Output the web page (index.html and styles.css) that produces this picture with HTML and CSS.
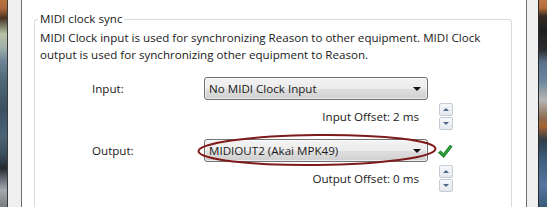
FILE: index.html
```html
<!DOCTYPE html>
<html>
<head>
<meta charset="utf-8">
<link rel="stylesheet" href="styles.css">
</head>
<body>
<div class="strip strip-left"></div>
<div class="panel panel-left"></div>
<main class="content">
  <fieldset class="group">
    <legend class="legend">MIDI clock sync</legend>
    <p class="desc">MIDI Clock input is used for synchronizing Reason to other equipment. MIDI Clock output is used for synchronizing other equipment to Reason.</p>
    <div class="grid">
      <div class="label r1">Input:</div>
      <div class="combo r1">
        <span class="combo-text">No MIDI Clock Input</span>
        <span class="arrow"></span>
      </div>
      <div class="offset r2">Input Offset: 2 ms</div>
      <div class="spin r2"><span class="spin-btn up"><i></i></span><span class="spin-btn down"><i></i></span></div>

      <div class="label r3">Output:</div>
      <div class="combo r3">
        <span class="combo-text">MIDIOUT2 (Akai MPK49)</span>
        <span class="arrow"></span>
        <svg class="ring" width="242" height="36" viewBox="0 0 242 36"><ellipse cx="121" cy="17" rx="118.5" ry="15" fill="none" stroke="#7f1a1a" stroke-width="2" transform="rotate(-0.6 121 17)"/></svg>
      </div>
      <div class="check r3"><svg width="16" height="15" viewBox="0 0 16 15"><path d="M0.8 8.4 L3.8 6.4 L6.3 9.2 L13 0.8 L15.6 2.4 L6.8 14 Z" fill="#17802a"/><path d="M2 8.4 L3.7 7.4 L6.4 10.4 L13.2 1.9 L14.5 2.7 L6.8 12.6 Z" fill="#2fa03a"/></svg></div>
      <div class="offset r4">Output Offset: 0 ms</div>
      <div class="spin r4"><span class="spin-btn up"><i></i></span><span class="spin-btn down"><i></i></span></div>
    </div>
  </fieldset>
</main>
<div class="panel panel-right"></div>
<div class="strip strip-right"></div>
</body>
</html>
```
FILE: styles.css
```css
html, body {
  margin: 0;
  padding: 0;
}
body {
  width: 547px;
  height: 207px;
  overflow: hidden;
  display: flex;
  font-family: "Open Sans", "Noto Sans", sans-serif;
  font-size: 11.6px;
  color: #1a1a1a;
  background: #fff;
}
.strip {
  flex: none;
  height: 207px;
}
.strip-left {
  width: 7px;
  border-right: 1px solid #3a3a3a;
  background: linear-gradient(to bottom,
    #b9733e 0px, #a86638 9px, #4a3322 18px, #6d6a55 24px, #b7c2a6 34px,
    #9fb0a8 48px, #6f8798 60px, #4f6878 80px, #3a5062 110px, #4b6476 135px,
    #3b4d5c 155px, #23292e 168px, #5d6670 178px, #a3a9ae 190px, #7a7c7e 207px);
}
.strip-right {
  width: 8px;
  border-left: 1px solid #2a2a2a;
  background: linear-gradient(to bottom,
    #c07a44 0px, #b06c3a 8px, #3a2a20 16px, #1e1e20 30px, #2a2c30 50px,
    #5a7088 62px, #6f88a0 82px, #b6b6b4 100px, #8a6c50 118px, #a86334 126px,
    #2e3c4a 140px, #3f5e7e 160px, #5577a0 185px, #3a5a7c 207px);
}
.panel {
  flex: none;
  height: 207px;
  background: #f0f0f0;
}
.panel-left {
  width: 13px;
  border-right: 1px solid #6f6f6f;
}
.panel-right {
  width: 11px;
  border-left: 1px solid #6f6f6f;
}
.content {
  flex: 1;
  min-width: 0;
  height: 207px;
  background: #fff;
}
.group {
  margin: 11px 14px 0 12px;
  padding: 2px 0 0 0;
  border: 1px solid #d5dde2;
  border-bottom: 0;
  border-radius: 3px 3px 0 0;
  height: 196px;
  box-sizing: border-box;
  min-width: 0;
}
.legend {
  padding: 0 2px;
  margin-left: 3px;
  line-height: 16px;
}
.desc {
  margin: 0;
  padding-left: 5px;
  line-height: 17px;
}
.grid {
  margin-top: 14px;
  padding-left: 57px;
  display: grid;
  grid-template-columns: 112px 224px 9px 16px;
  grid-template-rows: 23px 26px 4px 23px 26px;
  row-gap: 3px;
}
.r1 { grid-row: 1; }
.r2 { grid-row: 2; }
.r3 { grid-row: 4; }
.r4 { grid-row: 5; }
.label {
  grid-column: 1;
  align-self: center;
}
.combo {
  grid-column: 2;
  position: relative;
  display: flex;
  align-items: center;
  justify-content: space-between;
  padding: 0 6px 0 4px;
  border: 1px solid #707070;
  border-radius: 3px;
  background: linear-gradient(to bottom, #f3f3f3 0%, #ececec 50%, #dfdfdf 52%, #d0d0d0 100%);
  box-shadow: inset 0 0 0 1px rgba(255,255,255,0.6);
}
.combo-text {
  white-space: nowrap;
}
.arrow {
  width: 0;
  height: 0;
  border-left: 4px solid transparent;
  border-right: 4px solid transparent;
  border-top: 4px solid #111;
  margin-top: 1px;
}
.ring {
  position: absolute;
  left: -9px;
  top: -7px;
  pointer-events: none;
}
.offset {
  grid-column: 2;
  justify-self: end;
  align-self: center;
  padding-right: 9px;
}
.check {
  grid-column: 4;
  align-self: center;
  display: flex;
  margin-top: 1px;
}
.spin {
  grid-column: 4;
  margin-left: 2px;
  width: 14px;
  display: flex;
  flex-direction: column;
  gap: 1px;
  align-self: center;
}
.spin-btn {
  height: 11px;
  border: 1px solid #c4ccd6;
  border-radius: 2px;
  background: linear-gradient(to bottom, #f6f8fa, #e4e9ee);
  display: flex;
  align-items: center;
  justify-content: center;
}
.spin-btn i {
  width: 0;
  height: 0;
  border-left: 3.5px solid transparent;
  border-right: 3.5px solid transparent;
}
.up i {
  border-bottom: 3px solid #51648a;
}
.down i {
  border-top: 3px solid #51648a;
}
```
